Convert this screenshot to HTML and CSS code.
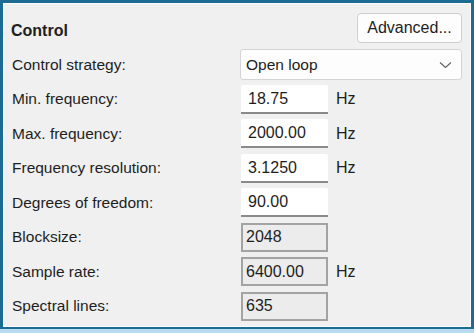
FILE: index.html
```html
<!DOCTYPE html>
<html>
<head>
<meta charset="utf-8">
<link rel="stylesheet" href="styles.css">
</head>
<body>
<div class="outer">
  <div class="panel">
    <div class="header">
      <span class="title">Control</span>
      <button class="btn">Advanced...</button>
    </div>
    <div class="grid">
      <div class="label">Control strategy:</div>
      <div class="select"><span>Open loop</span>
        <svg class="chev" width="13" height="8" viewBox="0 0 13 8"><path d="M1 1.5 L6.5 6.5 L12 1.5" fill="none" stroke="#606060" stroke-width="1.1"/></svg>
      </div>

      <div class="label">Min. frequency:</div>
      <div class="field edit">18.75</div><div class="unit">Hz</div>

      <div class="label">Max. frequency:</div>
      <div class="field edit">2000.00</div><div class="unit">Hz</div>

      <div class="label">Frequency resolution:</div>
      <div class="field edit">3.1250</div><div class="unit">Hz</div>

      <div class="label">Degrees of freedom:</div>
      <div class="field edit">90.00</div><div class="unit"></div>

      <div class="label">Blocksize:</div>
      <div class="field ro">2048</div><div class="unit"></div>

      <div class="label">Sample rate:</div>
      <div class="field ro">6400.00</div><div class="unit">Hz</div>

      <div class="label">Spectral lines:</div>
      <div class="field ro">635</div><div class="unit"></div>
    </div>
  </div>
</div>
</body>
</html>
```
FILE: styles.css
```css
html, body {
  margin: 0;
  padding: 0;
  background: #b9dcf0;
}
body {
  width: 474px;
  height: 333px;
  overflow: hidden;
  font-family: "Liberation Sans", Arial, sans-serif;
  font-size: 15.5px;
  color: #1e1e1e;
}
.outer {
  box-sizing: border-box;
  width: 474px;
  height: 329px;
  border: 3px solid #1c6b93;
  border-bottom-width: 2px;
  background: #f0f0f0;
}
.panel {
  box-sizing: border-box;
  height: 100%;
  border: 1px solid #fcfcfc;
  padding: 9px 8px 0 7px;
}
.header {
  display: flex;
  justify-content: space-between;
  align-items: center;
  height: 30px;
}
.title {
  font-weight: bold;
  font-size: 16px;
  padding-top: 6px;
}
.btn {
  font-family: inherit;
  font-size: 16px;
  color: #1e1e1e;
  background: #fdfdfd;
  border: 1px solid #cfcfcf;
  border-radius: 4px;
  height: 30px;
  width: 105px;
  padding: 0;
  margin-right: 0;
}
.grid {
  display: grid;
  grid-template-columns: 230px 87px 1fr;
  grid-auto-rows: 29px;
  row-gap: 5.5px;
  margin-top: 7px;
  align-items: center;
}
.label {
  padding-left: 1px;
}
.select {
  grid-column: 2 / 4;
  height: 31px;
  box-sizing: border-box;
  background: #fdfdfd;
  border: 1px solid #d4d4d4;
  border-radius: 3px;
  display: flex;
  align-items: center;
  justify-content: space-between;
  padding: 0 9px 0 5px;
  margin-left: -1px;
}
.field {
  box-sizing: border-box;
  height: 29px;
  display: flex;
  align-items: center;
  font-size: 16px;
}
.edit {
  background: #fff;
  border-bottom: 2px solid #8a8a8a;
  padding: 1px 7px 0 7px;
  border-radius: 2px 2px 0 0;
}
.ro {
  background: #ececec;
  border: 2px solid #a3a3a3;
  padding: 0 3px;
}
.unit {
  padding-left: 8px;
  font-size: 16px;
}
```
